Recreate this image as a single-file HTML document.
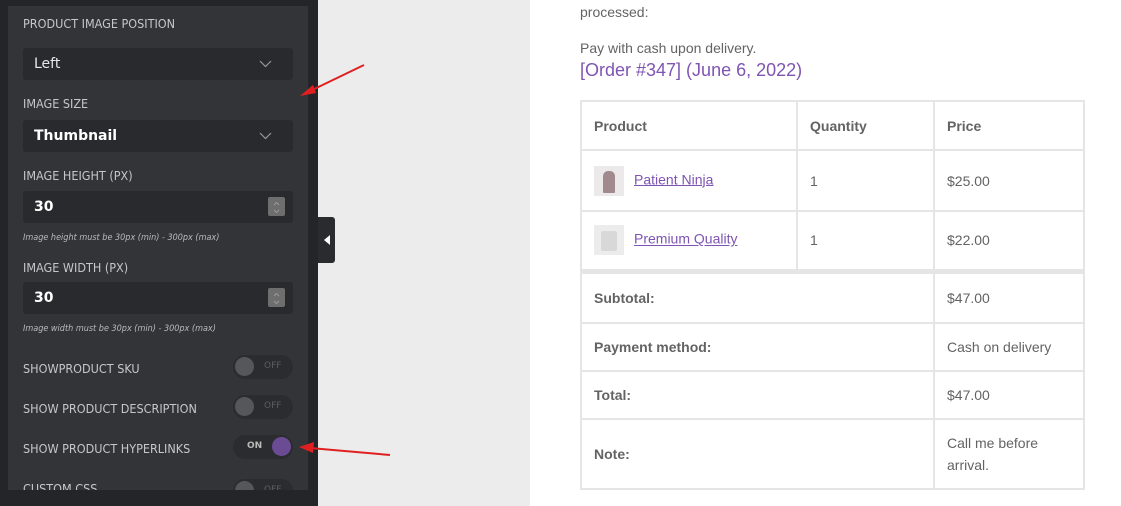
<!DOCTYPE html>
<html><head><meta charset="utf-8"><style>
*{margin:0;padding:0;box-sizing:border-box}
body{width:1121px;height:506px;overflow:hidden;position:relative;background:#fff;font-family:"Liberation Sans",sans-serif}
.a{position:absolute}
.lbl{position:absolute;left:23px;color:#c5c7cb;font-size:12.5px;font-family:"DejaVu Sans Condensed","DejaVu Sans",sans-serif;letter-spacing:0}
.box{position:absolute;left:23px;width:270px;height:32px;background:#292a2d;border-radius:3px;color:#e8e8e8;font-size:14px;padding-left:11px;line-height:32px;font-family:"DejaVu Sans","Liberation Sans",sans-serif}
.chev{position:absolute;right:21px;top:12px}
.spin{position:absolute;right:8px;top:6px;width:17px;height:19px;background:#6e6e6e;border-radius:2px}
.hint{position:absolute;left:23px;color:#b8bac0;font-size:9px;font-style:italic;font-family:"DejaVu Sans Condensed",sans-serif}
.tog{position:absolute;left:233px;width:60px;height:24px;border-radius:12px;background:#2b2c2f}
.tog .k{position:absolute;left:2px;top:2px;width:19px;height:19px;border-radius:50%;background:#56575b}
.tog .t{position:absolute;left:30px;top:6px;font-size:9px;color:#5c5d61;font-family:"DejaVu Sans",sans-serif}
td{border:2px solid #e5e5e5;color:#636363;font-size:14px;padding:0 12px;vertical-align:middle}
table{border-collapse:collapse;position:absolute;left:580px;top:100px;width:505px}
a{color:#7f54b3}
</style></head><body>
<div class="a" style="left:0;top:0;width:318px;height:506px;background:#232528"></div>
<div class="a" style="left:8px;top:6px;width:300px;height:484px;background:#333438"></div>
<div class="a" style="left:318px;top:0;width:212px;height:506px;background:#ececec"></div>
<div class="a" style="left:318px;top:217px;width:17px;height:46px;background:#2a2b2e;border-radius:0 3px 3px 0"></div>
<div class="a" style="left:324px;top:235px;width:0;height:0;border-top:5px solid transparent;border-bottom:5px solid transparent;border-right:6px solid #fff"></div>

<div class="lbl" style="top:16px">PRODUCT IMAGE POSITION</div>
<div class="box" style="top:48px">Left<svg class="chev" width="13" height="8"><path d="M1 1L6.5 6.5L12 1" fill="none" stroke="#999" stroke-width="1.2"/></svg></div>
<div class="lbl" style="top:96px">IMAGE SIZE</div>
<div class="box" style="top:120px;font-weight:bold;color:#fff">Thumbnail<svg class="chev" width="13" height="8"><path d="M1 1L6.5 6.5L12 1" fill="none" stroke="#999" stroke-width="1.2"/></svg></div>
<div class="lbl" style="top:168px">IMAGE HEIGHT (PX)</div>
<div class="box" style="top:191px;font-weight:bold;color:#fff">30<div class="spin"><svg width="17" height="19"><path d="M6 7L8.5 4.5L11 7M6 12L8.5 14.5L11 12" fill="none" stroke="#999" stroke-width="1"/></svg></div></div>
<div class="hint" style="top:233px">Image height must be 30px (min) - 300px (max)</div>
<div class="lbl" style="top:260px">IMAGE WIDTH (PX)</div>
<div class="box" style="top:282px;font-weight:bold;color:#fff">30<div class="spin"><svg width="17" height="19"><path d="M6 7L8.5 4.5L11 7M6 12L8.5 14.5L11 12" fill="none" stroke="#999" stroke-width="1"/></svg></div></div>
<div class="hint" style="top:324px">Image width must be 30px (min) - 300px (max)</div>
<div class="lbl" style="top:361px">SHOWPRODUCT SKU</div>
<div class="tog" style="top:355px"><div class="k"></div><div class="t" style="left:31px">OFF</div></div>
<div class="lbl" style="top:401px">SHOW PRODUCT DESCRIPTION</div>
<div class="tog" style="top:395px"><div class="k"></div><div class="t" style="left:31px">OFF</div></div>
<div class="lbl" style="top:441px">SHOW PRODUCT HYPERLINKS</div>
<div class="tog" style="top:435px"><div class="t" style="left:14px;color:#bbb;font-weight:bold">ON</div><div class="k" style="left:39px;background:#6b4c94"></div></div>
<div class="lbl" style="top:481px">CUSTOM CSS</div>
<div class="tog" style="top:479px"><div class="k"></div><div class="t" style="left:31px">OFF</div></div>
<div class="a" style="left:0;top:490px;width:318px;height:16px;background:#232528"></div>

<svg class="a" style="left:0;top:0" width="1121" height="506">
<line x1="364" y1="65" x2="308" y2="92" stroke="#e02020" stroke-width="2"/>
<polygon points="300,96 313,85 316,93" fill="#e02020"/>
<line x1="390" y1="455" x2="310" y2="448" stroke="#e02020" stroke-width="2"/>
<polygon points="299,447 314,442 313,453" fill="#e02020"/>
</svg>

<div class="a" style="left:580px;top:4px;color:#636363;font-size:14px">processed:</div>
<div class="a" style="left:580px;top:40px;color:#636363;font-size:14px">Pay with cash upon delivery.</div>
<div class="a" style="left:580px;top:60px;color:#7f54b3;font-size:18px">[Order #347] (June 6, 2022)</div>

<table>
<tr style="height:49px"><td style="width:216px;font-weight:bold">Product</td><td style="width:137px;font-weight:bold">Quantity</td><td style="font-weight:bold">Price</td></tr>
<tr style="height:61px"><td><span style="display:inline-block;width:30px;height:30px;background:#ebe9ea;vertical-align:middle;margin-right:10px;position:relative"><span style="position:absolute;left:9px;top:5px;width:12px;height:22px;background:#a08a8e;border-radius:5px 5px 1px 1px"></span></span><a href="#">Patient Ninja</a></td><td>1</td><td>$25.00</td></tr>
<tr style="height:60px"><td><span style="display:inline-block;width:30px;height:30px;background:#ececec;vertical-align:middle;margin-right:10px;position:relative"><span style="position:absolute;left:7px;top:6px;width:16px;height:20px;background:#d8d8d8;border-radius:2px"></span></span><a href="#">Premium Quality</a></td><td>1</td><td>$22.00</td></tr>
<tr style="height:52px;border-top:5px solid #e5e5e5"><td colspan="2" style="font-weight:bold">Subtotal:</td><td>$47.00</td></tr>
<tr style="height:48px"><td colspan="2" style="font-weight:bold">Payment method:</td><td>Cash on delivery</td></tr>
<tr style="height:48px"><td colspan="2" style="font-weight:bold">Total:</td><td>$47.00</td></tr>
<tr style="height:70px"><td colspan="2" style="font-weight:bold">Note:</td><td style="line-height:22px">Call me before<br>arrival.</td></tr>
</table>
</body></html>
